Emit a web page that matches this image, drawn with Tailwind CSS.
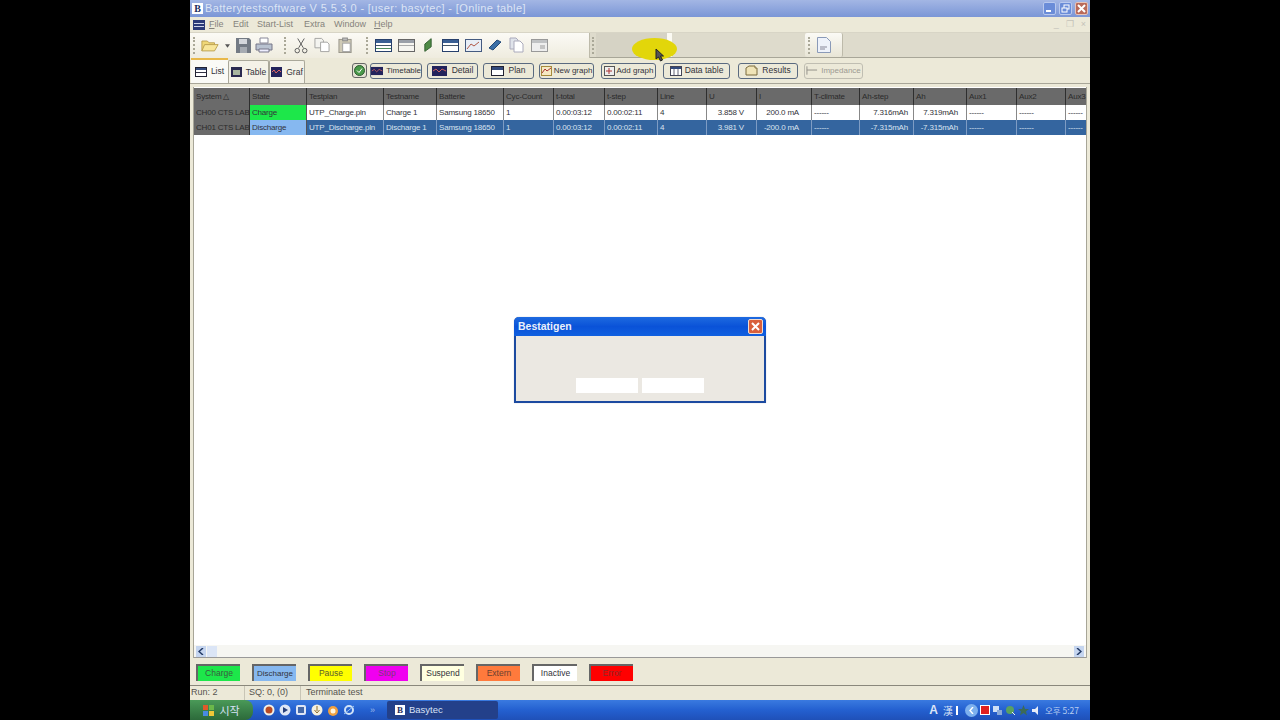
<!DOCTYPE html>
<html lang="en">
<head>
<meta charset="UTF-8">
<title>Batterytestsoftware</title>
<script src="https://cdn.jsdelivr.net/npm/@tailwindcss/browser@4"></script>
</head>
<body class="bg-black overflow-hidden font-['Liberation_Sans',sans-serif]">
<div class="relative w-[1280px] h-[720px] flex justify-center">
  <div class="w-[900px] h-[720px] flex flex-col bg-[#ece9d8] text-[#33333a]">

    <!-- title bar -->
    <div class="h-[17px] flex items-center pl-[2px] pr-[2px] bg-gradient-to-b from-[#a3b6e4] to-[#7b96d6]">
      <div class="w-[11px] h-[11px] bg-white text-[#1c2c5c] text-[10px] leading-[11px] text-center font-bold font-['Liberation_Serif',serif]">B</div>
      <div class="ml-[2px] text-[11px] tracking-[0.37px] text-[#dce4f4] whitespace-nowrap">Batterytestsoftware V 5.5.3.0 - [user: basytec] - [Online table]</div>
      <div class="ml-auto flex gap-[3px]">
        <div class="w-[13px] h-[13px] rounded-[2px] bg-[#6a8cd8] border border-[#b9c9ee] flex items-end justify-start p-[2px]"><div class="w-[5px] h-[2px] bg-white"></div></div>
        <div class="w-[13px] h-[13px] rounded-[2px] bg-[#6a8cd8] border border-[#b9c9ee] flex items-center justify-center"><svg width="9" height="9" viewBox="0 0 9 9" fill="none" stroke="white"><rect x="3" y="1" width="5" height="4"/><rect x="1" y="4" width="5" height="4" fill="#6a8cd8"/></svg></div>
        <div class="w-[13px] h-[13px] rounded-[2px] bg-[#b96a5a] border border-[#e6c3b8] flex items-center justify-center"><svg width="9" height="9" viewBox="0 0 9 9" stroke="white" stroke-width="2"><path d="M1 1L8 8M8 1L1 8"/></svg></div>
      </div>
    </div>

    <!-- menu bar -->
    <div class="h-[16px] flex items-center pl-[3px] pr-[4px] text-[9px] text-[#85837c] border-b border-[#d8d5c6]">
      <svg width="12" height="10" viewBox="0 0 12 10" class="mr-[4px]"><rect width="12" height="10" fill="#2b3a78"/><rect x="1" y="3" width="10" height="1" fill="#cfd6ea"/><rect x="1" y="6" width="10" height="1" fill="#cfd6ea"/></svg>
      <span class="w-[24px]"><u>F</u>ile</span>
      <span class="w-[24px]">Edit</span>
      <span class="w-[47px]">Start-List</span>
      <span class="w-[30px]">Extra</span>
      <span class="w-[40px]">Window</span>
      <span><u>H</u>elp</span>
      <div class="ml-auto flex gap-[7px] text-[#c4c2b8] text-[9px] leading-none"><span>_</span><span>❐</span><span>×</span></div>
    </div>

    <!-- toolbar -->
    <div class="relative h-[25px] flex items-center border-b border-[#a8a698] bg-[#dedbcc]">
      <div class="w-[400px] h-[25px] flex items-center pl-[3px] gap-[4px] bg-gradient-to-b from-[#fbfaf5] to-[#efecdf] border-r border-[#bdbaaa]">
        <div class="h-[17px] border-l-2 border-dotted border-[#aaa898]"></div>
        <svg width="18" height="15" viewBox="0 0 20 16" class="ml-[2px]"><path d="M1 14V3h6l2 2h6v2" fill="#f0d878" stroke="#b89c4c"/><path d="M1 14l3-7h15l-4 7z" fill="#f8e69a" stroke="#b89c4c"/></svg>
        <svg width="5" height="4" viewBox="0 0 6 4" class="mt-[2px] ml-[2px]"><path d="M0 0h6L3 4z" fill="#555"/></svg>
        <svg width="15" height="15" viewBox="0 0 15 15" class="ml-[2px]"><path d="M0 0h13l2 2v13H0z" fill="#737a84"/><rect x="3" y="1" width="8" height="5" fill="#d4d7dc"/><rect x="4" y="9" width="7" height="6" fill="#a6abb2"/></svg>
        <svg width="18" height="16" viewBox="0 0 18 16"><path d="M5 1h8v5H5z" fill="#fff" stroke="#889"/><path d="M1 7h16v6H1z" fill="#b9c2d0" stroke="#778"/><path d="M4 12h10v3H4z" fill="#eef" stroke="#778"/></svg>
        <div class="h-[17px] ml-[7px] border-l-2 border-dotted border-[#aaa898]"></div>
        <svg width="14" height="17" viewBox="0 0 15 17" class="ml-[4px]" fill="none" stroke="#555"><path d="M4 1l6 10M11 1L5 11"/><circle cx="3.500" cy="14" r="2.400"/><circle cx="11.500" cy="14" r="2.400"/></svg>
        <svg width="16" height="16" viewBox="0 0 17 16" class="ml-[2px]"><path d="M1 1h7l2 2v8H1z" fill="#f4f4f0" stroke="#a2a2a0"/><path d="M7 5h7l2 2v8H7z" fill="#fff" stroke="#a2a2a0"/></svg>
        <svg width="15" height="17" viewBox="0 0 16 17" class="ml-[4px]"><rect x="1" y="2" width="13" height="14" fill="#cfcab6" stroke="#98958a"/><rect x="5" y=".5" width="5" height="3" fill="#bbb" stroke="#888"/><rect x="5" y="6" width="8" height="9" fill="#fff" stroke="#a0a0a0"/></svg>
        <div class="h-[17px] ml-[9px] border-l-2 border-dotted border-[#aaa898]"></div>
        <svg width="17" height="13" viewBox="0 0 17 13" class="ml-[3px]"><rect x=".5" y=".5" width="16" height="12" fill="#fff" stroke="#27406c"/><rect x="1" y="1" width="15" height="3" fill="#3a5f94"/><rect x="1" y="6" width="15" height="1" fill="#456"/><rect x="1" y="9" width="15" height="1" fill="#4d8b5c"/></svg>
        <svg width="17" height="13" viewBox="0 0 17 13" class="ml-[2px]"><rect x=".5" y=".5" width="16" height="12" fill="#f6f5f0" stroke="#666"/><rect x="1" y="1" width="15" height="3" fill="#9a9fa8"/><rect x="1" y="6" width="15" height="1" fill="#aaa"/></svg>
        <svg width="10" height="16" viewBox="0 0 11 16" class="ml-[4px]"><path d="M2 15V7l7-6v9z" fill="#4f8a45" stroke="#2c5a2c"/></svg>
        <svg width="17" height="13" viewBox="0 0 17 13" class="ml-[5px]"><rect x=".5" y=".5" width="16" height="12" fill="#fff" stroke="#27406c"/><rect x="1" y="1" width="15" height="3" fill="#3a5f94"/><rect x="1" y="6" width="15" height="1" fill="#456"/></svg>
        <svg width="17" height="13" viewBox="0 0 17 13" class="ml-[2px]"><rect x=".5" y=".5" width="16" height="12" fill="#e8eef6" stroke="#445a80"/><path d="M2 10l4-5 3 2 5-4" fill="none" stroke="#b05848"/></svg>
        <svg width="14" height="12" viewBox="0 0 14 12" class="ml-[2px]"><path d="M1 9l8-8 4 2-8 8z" fill="#3b6fa6" stroke="#234a78"/></svg>
        <svg width="16" height="16" viewBox="0 0 16 16" class="ml-[3px]"><path d="M1 1h6l2 2v9H1z" fill="#dfe3ea" stroke="#aab"/><path d="M5 4h6l3 3v8H5z" fill="#fff" stroke="#aab"/></svg>
        <svg width="17" height="13" viewBox="0 0 17 13" class="ml-[2px]"><rect x=".5" y=".5" width="16" height="12" fill="#eee" stroke="#999"/><rect x="1" y="1" width="15" height="3" fill="#c0c2c4"/><rect x="9" y="6" width="5" height="4" fill="#c4c4c4"/></svg>
      </div>
      <div class="h-[17px] ml-[2px] border-l-2 border-dotted border-[#aaa898]"></div>
      <div class="w-[2px]"></div>
      <div class="w-[76px] h-[24px] bg-[#d6d3c5] border-r-[5px] border-[#fbfaf3]"></div>
      <div class="w-[133px]"></div>
      <div class="w-[38px] h-[24px] flex items-center pl-[3px] gap-[7px] bg-gradient-to-b from-[#fbfaf5] to-[#e8e5d6] rounded-[2px] border-r border-[#bdbaaa]">
        <div class="h-[17px] border-l-2 border-dotted border-[#aaa898]"></div>
        <svg width="14" height="16" viewBox="0 0 14 16"><path d="M.5.5h9l4 4v11H.5z" fill="#eef2fa" stroke="#8a9ab8"/><path d="M3 10h7M3 12h5" stroke="#889"/></svg>
      </div>
    </div>

    <!-- tabs and view buttons -->
    <div class="h-[26px] flex items-end pl-[1px] border-b border-[#a8a698] text-[8.5px]">
      <div class="w-[37px] h-[25px] flex items-center justify-center gap-[4px] bg-[#fafaf6] border-t-2 border-[#e8b84a]">
        <svg width="12" height="10" viewBox="0 0 12 10"><rect x=".5" y=".5" width="11" height="9" fill="#fff" stroke="#223"/><rect x="1" y="1" width="10" height="2" fill="#334a7c"/><rect x="1" y="5" width="10" height="1" fill="#334"/></svg><span>List</span>
      </div>
      <div class="w-[41px] h-[23px] flex items-center justify-center gap-[4px] bg-[#f4f2e8] border border-b-0 border-[#aaa89a] rounded-t-[2px]">
        <svg width="11" height="10" viewBox="0 0 11 10"><rect width="11" height="10" fill="#2a2a50"/><rect x="2" y="3" width="7" height="5" fill="#a9b6a0"/></svg><span>Table</span>
      </div>
      <div class="w-[36px] h-[23px] flex items-center justify-center gap-[4px] bg-[#f4f2e8] border border-b-0 border-[#aaa89a] rounded-t-[2px]">
        <svg width="11" height="10" viewBox="0 0 11 10"><rect width="11" height="10" fill="#23235c"/><path d="M1 5l2-2 2 3 3-3 2 2" fill="none" stroke="#d66"/></svg><span>Graf</span>
      </div>
      <div class="self-center ml-[47px] flex items-center h-[17px] whitespace-nowrap">
        <div class="w-[15px] h-[15px] rounded-[3px] border border-[#666] flex items-center justify-center bg-[#e4e2d4]"><svg width="11" height="11" viewBox="0 0 11 11"><circle cx="5.500" cy="5.500" r="5" fill="#4a9a4a" stroke="#2c5c30"/><path d="M3 5.500l2 2 3-4" fill="none" stroke="#fff"/></svg></div>
        <div class="w-[52px] ml-[3px] h-[16px] flex items-center justify-center gap-[3px] border border-[#5a6a80] rounded-[3px]"><svg width="14" height="10" viewBox="0 0 15 10"><rect width="15" height="10" fill="#23235c"/><path d="M1 5l3-2 3 3 3-3 4 2" fill="none" stroke="#c66"/></svg><span class="text-[8px]">Timetable</span></div>
        <div class="w-[51px] ml-[5px] h-[16px] flex items-center justify-center gap-[5px] border border-[#5a6a80] rounded-[3px]"><svg width="15" height="10" viewBox="0 0 15 10"><rect width="15" height="10" fill="#23235c"/><path d="M1 5l3-2 3 3 3-3 4 2" fill="none" stroke="#c66"/></svg><span>Detail</span></div>
        <div class="w-[51px] ml-[5px] h-[16px] flex items-center justify-center gap-[4px] border border-[#5a6a80] rounded-[3px]"><svg width="13" height="10" viewBox="0 0 13 10"><rect x=".5" y=".5" width="12" height="9" fill="#fff" stroke="#223"/><rect x="1" y="1" width="11" height="3" fill="#334a7c"/></svg><span>Plan</span></div>
        <div class="w-[55px] ml-[5px] h-[16px] flex items-center justify-center gap-[2px] border border-[#5a6a80] rounded-[3px]"><svg width="11" height="10" viewBox="0 0 11 10"><rect x=".5" y=".5" width="10" height="9" fill="#f6e9c4" stroke="#a68b3c"/><path d="M1 7l3-4 2 2 4-3" fill="none" stroke="#a33"/></svg><span class="text-[8px]">New graph</span></div>
        <div class="w-[55px] ml-[7px] h-[16px] flex items-center justify-center gap-[2px] border border-[#5a6a80] rounded-[3px]"><svg width="11" height="10" viewBox="0 0 11 10"><rect x=".5" y=".5" width="10" height="9" fill="#eee" stroke="#555"/><path d="M5 2v6M2 5h6" stroke="#a33"/></svg><span class="text-[8px]">Add graph</span></div>
        <div class="w-[67px] ml-[7px] h-[16px] flex items-center justify-center gap-[3px] border border-[#5a6a80] rounded-[3px]"><svg width="12" height="10" viewBox="0 0 12 10"><rect x=".5" y=".5" width="11" height="9" fill="#fff" stroke="#445"/><rect x="1" y="1" width="10" height="2" fill="#334a7c"/><path d="M4 3v6M8 3v6" stroke="#667"/></svg><span>Data table</span></div>
        <div class="w-[60px] ml-[8px] h-[16px] flex items-center justify-center gap-[4px] border border-[#5a6a80] rounded-[3px]"><svg width="13" height="11" viewBox="0 0 13 11"><path d="M1 10V3l3-2h6v2h2v7z" fill="#f0e4b8" stroke="#7a6a3c"/></svg><span>Results</span></div>
        <div class="w-[59px] ml-[6px] h-[16px] flex items-center justify-center gap-[3px] border border-[#c0beb2] rounded-[3px] text-[#9c9a92]"><svg width="12" height="9" viewBox="0 0 13 9" fill="none" stroke="#8f8d85"><path d="M1 0v9M1 4h11"/></svg><span class="text-[8px]">Impedance</span></div>
      </div>
    </div>

    <!-- table panel -->
    <div class="flex-1 flex flex-col bg-white ml-[3px] mr-[3px] mt-[3px] pt-[1px] border-l border-r border-[#a8a698] text-[8px] tracking-[-0.2px] leading-none">
      <div class="flex-1">
        <div class="grid grid-cols-[56px_57px_77px_53px_67px_50px_51px_53px_49px_50px_55px_48px_54px_53px_50px_49px_20px] w-[892px]">
          <!-- header row -->
          <div class="h-[17px] flex items-center pl-[2px] bg-[#6a6a6a] border-r border-[#2e2e2e] text-[#2a2a2a] whitespace-nowrap">System △</div>
          <div class="h-[17px] flex items-center pl-[2px] bg-[#6a6a6a] border-r border-[#2e2e2e] text-[#2a2a2a]">State</div>
          <div class="h-[17px] flex items-center pl-[2px] bg-[#6a6a6a] border-r border-[#2e2e2e] text-[#2a2a2a]">Testplan</div>
          <div class="h-[17px] flex items-center pl-[2px] bg-[#6a6a6a] border-r border-[#2e2e2e] text-[#2a2a2a]">Testname</div>
          <div class="h-[17px] flex items-center pl-[2px] bg-[#6a6a6a] border-r border-[#2e2e2e] text-[#2a2a2a]">Batterie</div>
          <div class="h-[17px] flex items-center pl-[2px] bg-[#6a6a6a] border-r border-[#2e2e2e] text-[#2a2a2a] whitespace-nowrap">Cyc-Count</div>
          <div class="h-[17px] flex items-center pl-[2px] bg-[#6a6a6a] border-r border-[#2e2e2e] text-[#2a2a2a]">t-total</div>
          <div class="h-[17px] flex items-center pl-[2px] bg-[#6a6a6a] border-r border-[#2e2e2e] text-[#2a2a2a]">t-step</div>
          <div class="h-[17px] flex items-center pl-[2px] bg-[#6a6a6a] border-r border-[#2e2e2e] text-[#2a2a2a]">Line</div>
          <div class="h-[17px] flex items-center pl-[2px] bg-[#6a6a6a] border-r border-[#2e2e2e] text-[#2a2a2a]">U</div>
          <div class="h-[17px] flex items-center pl-[2px] bg-[#6a6a6a] border-r border-[#2e2e2e] text-[#2a2a2a]">I</div>
          <div class="h-[17px] flex items-center pl-[2px] bg-[#6a6a6a] border-r border-[#2e2e2e] text-[#2a2a2a]">T-climate</div>
          <div class="h-[17px] flex items-center pl-[2px] bg-[#6a6a6a] border-r border-[#2e2e2e] text-[#2a2a2a]">Ah-step</div>
          <div class="h-[17px] flex items-center pl-[2px] bg-[#6a6a6a] border-r border-[#2e2e2e] text-[#2a2a2a]">Ah</div>
          <div class="h-[17px] flex items-center pl-[2px] bg-[#6a6a6a] border-r border-[#2e2e2e] text-[#2a2a2a]">Aux1</div>
          <div class="h-[17px] flex items-center pl-[2px] bg-[#6a6a6a] border-r border-[#2e2e2e] text-[#2a2a2a]">Aux2</div>
          <div class="h-[17px] flex items-center pl-[2px] bg-[#6a6a6a] text-[#2a2a2a]">Aux3</div>
          <!-- row 1 -->
          <div class="h-[15px] flex items-center pl-[2px] bg-[#6a6a6a] border-r border-[#2e2e2e] text-[#2a2a2a] whitespace-nowrap">CH00 CTS LAB</div>
          <div class="h-[15px] flex items-center pl-[2px] bg-[#1de74a] border-r border-[#555]">Charge</div>
          <div class="h-[15px] flex items-center pl-[2px] border-r border-[#888]">UTP_Charge.pln</div>
          <div class="h-[15px] flex items-center pl-[2px] border-r border-[#888]">Charge 1</div>
          <div class="h-[15px] flex items-center pl-[2px] border-r border-[#888] whitespace-nowrap">Samsung 18650</div>
          <div class="h-[15px] flex items-center pl-[2px] border-r border-[#888]">1</div>
          <div class="h-[15px] flex items-center pl-[2px] border-r border-[#888]">0.00:03:12</div>
          <div class="h-[15px] flex items-center pl-[2px] border-r border-[#888]">0.00:02:11</div>
          <div class="h-[15px] flex items-center pl-[2px] border-r border-[#888]">4</div>
          <div class="h-[15px] flex items-center justify-end pr-[12px] border-r border-[#888]">3.858 V</div>
          <div class="h-[15px] flex items-center justify-end pr-[12px] border-r border-[#888]">200.0 mA</div>
          <div class="h-[15px] flex items-center pl-[2px] border-r border-[#888]">------</div>
          <div class="h-[15px] flex items-center justify-end pr-[5px] border-r border-[#888]">7.316mAh</div>
          <div class="h-[15px] flex items-center justify-end pr-[8px] border-r border-[#888]">7.319mAh</div>
          <div class="h-[15px] flex items-center pl-[2px] border-r border-[#888]">------</div>
          <div class="h-[15px] flex items-center pl-[2px] border-r border-[#888]">------</div>
          <div class="h-[15px] flex items-center pl-[2px]">------</div>
          <!-- row 2 -->
          <div class="h-[15px] flex items-center pl-[2px] bg-[#6a6a6a] border-r border-[#2e2e2e] text-[#2a2a2a] whitespace-nowrap">CH01 CTS LAB</div>
          <div class="h-[15px] flex items-center pl-[2px] bg-[#86b8f0] border-r border-[#555]">Discharge</div>
          <div class="h-[15px] flex items-center pl-[2px] bg-[#34659f] text-[#d9e3ef] border-r border-[#7e9cc4]">UTP_Discharge.pln</div>
          <div class="h-[15px] flex items-center pl-[2px] bg-[#34659f] text-[#d9e3ef] border-r border-[#7e9cc4]">Discharge 1</div>
          <div class="h-[15px] flex items-center pl-[2px] bg-[#34659f] text-[#d9e3ef] border-r border-[#7e9cc4] whitespace-nowrap">Samsung 18650</div>
          <div class="h-[15px] flex items-center pl-[2px] bg-[#34659f] text-[#d9e3ef] border-r border-[#7e9cc4]">1</div>
          <div class="h-[15px] flex items-center pl-[2px] bg-[#34659f] text-[#d9e3ef] border-r border-[#7e9cc4]">0.00:03:12</div>
          <div class="h-[15px] flex items-center pl-[2px] bg-[#34659f] text-[#d9e3ef] border-r border-[#7e9cc4]">0.00:02:11</div>
          <div class="h-[15px] flex items-center pl-[2px] bg-[#34659f] text-[#d9e3ef] border-r border-[#7e9cc4]">4</div>
          <div class="h-[15px] flex items-center justify-end pr-[12px] bg-[#34659f] text-[#d9e3ef] border-r border-[#7e9cc4]">3.981 V</div>
          <div class="h-[15px] flex items-center justify-end pr-[12px] bg-[#34659f] text-[#d9e3ef] border-r border-[#7e9cc4]">-200.0 mA</div>
          <div class="h-[15px] flex items-center pl-[2px] bg-[#34659f] text-[#d9e3ef] border-r border-[#7e9cc4]">------</div>
          <div class="h-[15px] flex items-center justify-end pr-[5px] bg-[#34659f] text-[#d9e3ef] border-r border-[#7e9cc4]">-7.315mAh</div>
          <div class="h-[15px] flex items-center justify-end pr-[8px] bg-[#34659f] text-[#d9e3ef] border-r border-[#7e9cc4]">-7.315mAh</div>
          <div class="h-[15px] flex items-center pl-[2px] bg-[#34659f] text-[#d9e3ef] border-r border-[#7e9cc4]">------</div>
          <div class="h-[15px] flex items-center pl-[2px] bg-[#34659f] text-[#d9e3ef] border-r border-[#7e9cc4]">------</div>
          <div class="h-[15px] flex items-center pl-[2px] bg-[#34659f] text-[#d9e3ef]">------</div>
        </div>
      </div>
      <!-- horizontal scrollbar -->
      <div class="h-[13px] flex items-center justify-between px-[2px] bg-[#f6f6f2] border-b border-[#999]">
        <div class="flex gap-[1px]">
          <div class="w-[10px] h-[11px] bg-[#c5d5ef] flex items-center justify-center"><svg width="6" height="7" viewBox="0 0 6 7" fill="none" stroke="#223a66" stroke-width="1.500"><path d="M5 0L1 3.500 5 7"/></svg></div>
          <div class="w-[10px] h-[11px] bg-[#dbe5f6]"></div>
        </div>
        <div class="w-[10px] h-[11px] bg-[#c5d5ef] flex items-center justify-center"><svg width="6" height="7" viewBox="0 0 6 7" fill="none" stroke="#223a66" stroke-width="1.500"><path d="M1 0l4 3.500L1 7"/></svg></div>
      </div>
    </div>

    <!-- state legend -->
    <div class="h-[28px] flex items-center pl-[6px] pt-[2px] gap-[12px] text-[8.5px] border-b border-[#8a887c]">
      <div class="w-[44px] h-[17px] flex items-center justify-center bg-[#1de74a] border-t-2 border-l-2 border-[#666] text-[#3a5a40]">Charge</div>
      <div class="w-[44px] h-[17px] flex items-center justify-center bg-[#86b8f0] border-t-2 border-l-2 border-[#666] text-[8px]">Discharge</div>
      <div class="w-[44px] h-[17px] flex items-center justify-center bg-[#ffff00] border-t-2 border-l-2 border-[#666] text-[#5a5a30]">Pause</div>
      <div class="w-[44px] h-[17px] flex items-center justify-center bg-[#f000f0] border-t-2 border-l-2 border-[#666] text-[#7a3a7a]">Stop</div>
      <div class="w-[44px] h-[17px] flex items-center justify-center bg-[#ffffe0] border-t-2 border-l-2 border-[#666]">Suspend</div>
      <div class="w-[44px] h-[17px] flex items-center justify-center bg-[#ff7a3c] border-t-2 border-l-2 border-[#666] text-[#6a4030]">Extern</div>
      <div class="w-[45px] h-[17px] flex items-center justify-center bg-white border-t-2 border-l-2 border-[#666]">Inactive</div>
      <div class="w-[44px] h-[17px] flex items-center justify-center bg-[#ff0000] border-t-2 border-l-2 border-[#666] text-[#8a2a2a]">Error</div>
    </div>

    <!-- status bar -->
    <div class="h-[14px] flex items-center pl-[1px] text-[9px] text-[#55534e]">
      <span class="w-[54px] border-r border-[#c8c5b6]">Run: 2</span>
      <span class="w-[56px] pl-[4px] border-r border-[#c8c5b6]">SQ: 0, (0)</span>
      <span class="pl-[5px]">Terminate test</span>
    </div>

    <!-- taskbar -->
    <div class="h-[20px] flex items-center bg-gradient-to-b from-[#3a7ae0] via-[#2460d0] to-[#1f50b8] text-[#d8e2f6]">
      <div class="w-[63px] h-[20px] flex items-center justify-center gap-[5px] bg-gradient-to-b from-[#4a9a58] to-[#2c6a3a] rounded-r-[8px] text-[11px] font-['Noto_Sans_CJK_KR',sans-serif]">
        <svg width="11" height="11" viewBox="0 0 11 11"><rect width="5" height="5" fill="#e05a2a"/><rect x="6" width="5" height="5" fill="#6bb84a"/><rect y="6" width="5" height="5" fill="#4a8ae0"/><rect x="6" y="6" width="5" height="5" fill="#f0c838"/></svg>
        <span>시작</span>
      </div>
      <div class="ml-[10px] flex items-center gap-[4px]">
        <svg width="12" height="12" viewBox="0 0 12 12"><circle cx="6" cy="6" r="5.500" fill="#f2efe6"/><circle cx="6" cy="6" r="3.500" fill="#b84a24"/></svg>
        <svg width="12" height="12" viewBox="0 0 12 12"><circle cx="6" cy="6" r="5.500" fill="#dfe6f5"/><path d="M4 3l5 3-5 3z" fill="#28407c"/></svg>
        <svg width="12" height="12" viewBox="0 0 12 12"><rect x="1" y="1" width="10" height="10" rx="2" fill="#dfe6f5"/><rect x="3" y="3" width="6" height="6" fill="#4468a8"/></svg>
        <svg width="12" height="12" viewBox="0 0 12 12"><circle cx="6" cy="6" r="5.500" fill="#f4f0e0"/><path d="M6 2v5M3.500 6L6 9l2.500-3" stroke="#8a6a28" fill="none"/></svg>
        <svg width="12" height="12" viewBox="0 0 12 12"><circle cx="6" cy="7" r="5" fill="#f0a040"/><circle cx="6" cy="7" r="2.500" fill="#fff4dc"/></svg>
        <svg width="12" height="12" viewBox="0 0 12 12"><circle cx="6" cy="6" r="4" fill="none" stroke="#cfe2f8" stroke-width="2"/><path d="M1 10L11 2" stroke="#9cc4f0"/></svg>
      </div>
      <div class="ml-[15px] w-[10px] text-[9px] leading-none text-[#9db8e8]">»</div>
      <div class="ml-[7px] w-[111px] h-[18px] flex items-center pl-[8px] gap-[4px] bg-[#23408a] rounded-[2px] text-[9.5px]">
        <div class="w-[10px] h-[10px] bg-white text-[#1c2c5c] text-[9px] leading-[10px] text-center font-bold font-['Liberation_Serif',serif]">B</div>
        <span>Basytec</span>
      </div>
      <div class="ml-auto h-[20px] flex items-center pr-[11px] gap-[2px] text-[8.5px]">
        <span class="text-[12px] text-[#dbe5f7] font-bold">A</span>
        <span class="ml-[3px] mr-[1px] text-[10px] text-[#dbe5f7] font-['Noto_Sans_CJK_TC',sans-serif]">漢</span>
        <div class="w-[2px] h-[9px] bg-white mr-[5px]"></div>
        <div class="w-[13px] h-[13px] rounded-full bg-[#7cb0ee] flex items-center justify-center"><svg width="5" height="7" viewBox="0 0 5 7" fill="none" stroke="#fff" stroke-width="1.400"><path d="M4 0L1 3.500 4 7"/></svg></div>
        <div class="w-[10px] h-[10px] bg-[#e02020] border border-white"></div>
        <svg width="11" height="11" viewBox="0 0 11 11"><rect x="1" y="1" width="6" height="6" fill="#cfe0f6"/><rect x="5" y="5" width="5" height="5" fill="#88a8d8"/></svg>
        <svg width="11" height="11" viewBox="0 0 11 11"><circle cx="5" cy="5" r="4" fill="#5aa060"/><path d="M7 7l3 3" stroke="#eee"/></svg>
        <svg width="11" height="11" viewBox="0 0 11 11"><path d="M5.500 0l1.500 4h4l-3 2.500 1 4-3.500-2.500-3.500 2.500 1-4-3-2.500h4z" fill="#3c6a58"/></svg>
        <svg width="10" height="11" viewBox="0 0 10 11"><path d="M1 4h3l3-3v9L4 7H1z" fill="#e6ecf8"/></svg>
        <span class="ml-[2px] text-[#b8cdf0] font-['Noto_Sans_CJK_KR',sans-serif] whitespace-nowrap">오후 5:27</span>
      </div>
    </div>
  </div>

  <!-- highlight behind the mouse pointer -->
  <div class="absolute left-[632px] top-[38px] w-[45px] h-[22px] rounded-[50%] bg-[#e2d60a]"></div>
  <svg class="absolute left-[655px] top-[48px]" width="9" height="14" viewBox="0 0 9 14"><path d="M1 1v10l2.500-2 2 4 2-1-2-4h3z" fill="#555" stroke="#222"/></svg>

  <!-- confirmation dialog -->
  <div class="absolute left-[514px] top-[317px] w-[252px] h-[86px] flex flex-col bg-[#ebe8e2] border-2 border-t-0 border-[#1c4aa0] rounded-t-[5px] shadow-[0_0_1px_#99a]">
    <div class="-mx-[2px] h-[19px] flex items-center justify-between pl-[4px] pr-[3px] rounded-t-[5px] bg-gradient-to-b from-[#1e6ae0] via-[#0a52d8] to-[#1060e0] text-[#eaf0fb] text-[10.5px] font-bold">
      <span>Bestatigen</span>
      <div class="w-[15px] h-[15px] rounded-[2px] bg-[#d9603c] border border-[#f2dcd0] flex items-center justify-center"><svg width="9" height="9" viewBox="0 0 9 9" stroke="white" stroke-width="2"><path d="M1 1L8 8M8 1L1 8"/></svg></div>
    </div>
    <div class="flex-1 flex items-end justify-center gap-[4px] pb-[8px] pr-[1px]">
      <div class="w-[62px] h-[15px] bg-white"></div>
      <div class="w-[62px] h-[15px] bg-white"></div>
    </div>
  </div>
</div>
</body>
</html>
